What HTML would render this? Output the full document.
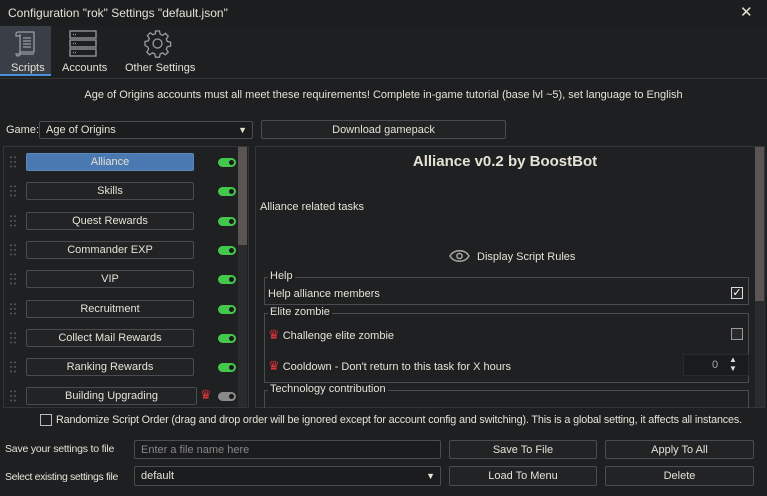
<!DOCTYPE html>
<html><head><meta charset="utf-8"><style>
*{box-sizing:border-box;margin:0;padding:0}
body{width:767px;height:496px;background:#1e1f21;font-family:"Liberation Sans",sans-serif;font-size:11px;color:#e6e2d6;position:relative;overflow:hidden;white-space:nowrap}
.a{position:absolute}
.btn{position:absolute;border:1px solid #4a4c50;border-radius:2px;background:#222325;text-align:center;color:#e6e2d6}
.sb{position:absolute;left:26px;width:168px;height:18px;line-height:17px}
.tg{position:absolute;left:218px;width:18px;height:9px;border-radius:5px;background:#44c84c}
.tg::after{content:"";position:absolute;right:2px;top:2px;width:5px;height:5px;border-radius:50%;background:#1a1a1a}
.dots{position:absolute;left:9px;width:8px;height:14px;background-image:radial-gradient(circle,#555 0.9px,transparent 1.1px);background-size:4px 4.6px}
.grp{position:absolute;left:264px;width:485px;border:1px solid #4a4c50}
.gl{position:absolute;left:3px;top:-8px;background:#1e1f21;padding:0 2px}
.cb{position:absolute;width:12px;height:12px;border:1px solid #9a9a9a;background:#2a2a2a}
.crown{color:#e0353a;font-size:13px}
</style></head><body>
<div class="a" style="left:0;top:0;width:767px;height:26px;background:#1c1d1f"></div>
<div class="a" style="left:8px;top:6px;font-size:12px">Configuration "rok" Settings "default.json"</div>
<div class="a" style="left:740px;top:3px;font-size:15px">✕</div>
<div class="a" style="left:0;top:26px;width:51px;height:50px;background:#3a3f47;border-bottom:2px solid #4a90d9"></div>
<svg class="a" style="left:12px;top:29px" width="28" height="28" viewBox="0 0 28 28" fill="none" stroke="#9a9ca0" stroke-width="1.3"><path d="M6 3h16v20H8M6 3a2 2 0 0 0-2 2v2h4M8 5v20a2 2 0 0 1-4 0h18"/><path d="M11 9h8M11 12h8M11 15h8M11 18h8"/></svg>
<svg class="a" style="left:68px;top:29px" width="30" height="28" viewBox="0 0 30 28" fill="none" stroke="#9a9ca0" stroke-width="1.3"><rect x="2" y="2" width="26" height="7"/><rect x="2" y="11" width="26" height="7"/><rect x="2" y="20" width="26" height="7"/><path d="M5 5.5h4M5 14.5h4M5 23.5h4" stroke-dasharray="1 1"/></svg>
<svg class="a" style="left:143px;top:29px" width="29" height="29" viewBox="0 0 29 29" fill="none" stroke="#9a9ca0" stroke-width="1.3"><circle cx="14.5" cy="14.5" r="4.5"/><path d="M12.5 2h4l.7 3.3 2.4 1 2.8-1.9 2.8 2.8-1.9 2.8 1 2.4 3.3.7v4l-3.3.7-1 2.4 1.9 2.8-2.8 2.8-2.8-1.9-2.4 1-.7 3.3h-4l-.7-3.3-2.4-1-2.8 1.9-2.8-2.8 1.9-2.8-1-2.4L2 16.5v-4l3.3-.7 1-2.4-1.9-2.8 2.8-2.8 2.8 1.9 2.4-1z"/></svg>
<div class="a" style="left:11px;top:62px">Scripts</div>
<div class="a" style="left:62px;top:62px">Accounts</div>
<div class="a" style="left:125px;top:62px">Other Settings</div>
<div class="a" style="left:0;top:78px;width:767px;height:1px;background:#333538"></div>
<div class="a" style="left:0;top:89px;width:767px;text-align:center">Age of Origins accounts must all meet these requirements! Complete in-game tutorial (base lvl ~5), set language to English</div>
<div class="a" style="left:6px;top:124px">Game:</div>
<div class="btn" style="left:39px;top:121px;width:214px;height:18px;text-align:left;padding-left:6px;line-height:17px;background:#1b1c1e">Age of Origins<span style="position:absolute;right:5px;top:0;font-size:9px">▼</span></div>
<div class="btn" style="left:261px;top:120px;width:245px;height:19px;line-height:18px">Download gamepack</div>
<div class="a" style="left:3px;top:146px;width:246px;height:262px;border:1px solid #333538;background:#1f2022"></div>
<div class="a" style="left:238px;top:147px;width:9px;height:260px;background:#2a2b2d"></div>
<div class="a" style="left:238px;top:147px;width:9px;height:98px;background:#5a5552"></div>
<div class="btn sb" style="top:153px;background:#4a78b0;border-color:#5a88c0">Alliance</div>
<div class="btn sb" style="top:182px">Skills</div>
<div class="btn sb" style="top:212px">Quest Rewards</div>
<div class="btn sb" style="top:241px">Commander EXP</div>
<div class="btn sb" style="top:270px">VIP</div>
<div class="btn sb" style="top:300px">Recruitment</div>
<div class="btn sb" style="top:329px">Collect Mail Rewards</div>
<div class="btn sb" style="top:358px">Ranking Rewards</div>
<div class="btn sb" style="top:387px;width:171px">Building Upgrading</div>
<div class="dots" style="top:155px"></div><div class="dots" style="top:184px"></div><div class="dots" style="top:214px"></div><div class="dots" style="top:243px"></div><div class="dots" style="top:272px"></div><div class="dots" style="top:302px"></div><div class="dots" style="top:331px"></div><div class="dots" style="top:360px"></div><div class="dots" style="top:389px"></div>
<div class="tg" style="top:158px"></div><div class="tg" style="top:187px"></div><div class="tg" style="top:217px"></div><div class="tg" style="top:246px"></div><div class="tg" style="top:275px"></div><div class="tg" style="top:305px"></div><div class="tg" style="top:334px"></div><div class="tg" style="top:363px"></div><div class="tg" style="top:392px;background:#8a8a8a"></div>
<div class="a crown" style="left:200px;top:387px">♛</div>
<div class="a" style="left:255px;top:146px;width:510px;height:262px;border:1px solid #333538;background:#1f2022;overflow:hidden">
<div class="a" style="right:0;top:0;width:9px;height:260px;background:#2a2b2d"></div>
<div class="a" style="right:0;top:0;width:9px;height:154px;background:#5a5552"></div>
</div>
<div class="a" style="left:255px;top:153px;width:500px;text-align:center;font-size:15px;font-weight:bold">Alliance v0.2 by BoostBot</div>
<div class="a" style="left:260px;top:201px">Alliance related tasks</div>
<svg class="a" style="left:449px;top:249px" width="21" height="14" viewBox="0 0 21 14" fill="none" stroke="#aaa" stroke-width="1.4"><path d="M1 7C5 0 16 0 20 7C16 14 5 14 1 7z"/><circle cx="10.5" cy="7" r="2.6"/></svg>
<div class="a" style="left:477px;top:251px">Display Script Rules</div>
<div class="grp" style="top:277px;height:28px"><span class="gl">Help</span></div>
<div class="a" style="left:268px;top:288px">Help alliance members</div>
<div class="cb" style="left:731px;top:287px;border-color:#ddd;color:#fff;font-size:11px;line-height:10px;text-align:center">✓</div>
<div class="grp" style="top:313px;height:70px"><span class="gl">Elite zombie</span></div>
<div class="a" style="left:268px;top:327px"><span class="crown">♛</span> Challenge elite zombie</div>
<div class="cb" style="left:731px;top:328px"></div>
<div class="a" style="left:268px;top:358px"><span class="crown">♛</span> Cooldown - Don't return to this task for X hours</div>
<div class="a" style="left:683px;top:354px;width:66px;height:22px;background:#1a1b1c;border:1px solid #2a2b2d"></div>
<div class="a" style="left:712px;top:359px;color:#aaa">0</div>
<div class="a" style="left:729px;top:355px;font-size:8px;line-height:9px;color:#ddd">▲<br>▼</div>
<div class="grp" style="top:390px;height:30px;border-bottom:none"><span class="gl">Technology contribution</span></div>
<div class="a" style="left:255px;top:408px;width:512px;height:88px;background:#1e1f21"></div>
<div class="cb" style="left:40px;top:414px;border-color:#bbb;background:#1e1f21"></div>
<div class="a" style="left:56px;top:414px;font-size:10.8px;letter-spacing:-0.15px">Randomize Script Order (drag and drop order will be ignored except for account config and switching). This is a global setting, it affects all instances.</div>
<div class="a" style="left:5px;top:443px;font-size:10.5px;letter-spacing:-0.2px">Save your settings to file</div>
<div class="btn" style="left:134px;top:440px;width:307px;height:19px;text-align:left;padding-left:6px;line-height:18px;color:#888;background:#1b1c1e">Enter a file name here</div>
<div class="btn" style="left:449px;top:440px;width:148px;height:19px;line-height:18px">Save To File</div>
<div class="btn" style="left:605px;top:440px;width:149px;height:19px;line-height:18px">Apply To All</div>
<div class="a" style="left:5px;top:471px;font-size:10.5px;letter-spacing:-0.35px">Select existing settings file</div>
<div class="btn" style="left:134px;top:466px;width:307px;height:20px;text-align:left;padding-left:6px;line-height:19px;background:#1b1c1e">default<span style="position:absolute;right:5px;top:0;font-size:9px">▼</span></div>
<div class="btn" style="left:449px;top:466px;width:148px;height:20px;line-height:19px">Load To Menu</div>
<div class="btn" style="left:605px;top:466px;width:149px;height:20px;line-height:19px">Delete</div>
</body></html>
